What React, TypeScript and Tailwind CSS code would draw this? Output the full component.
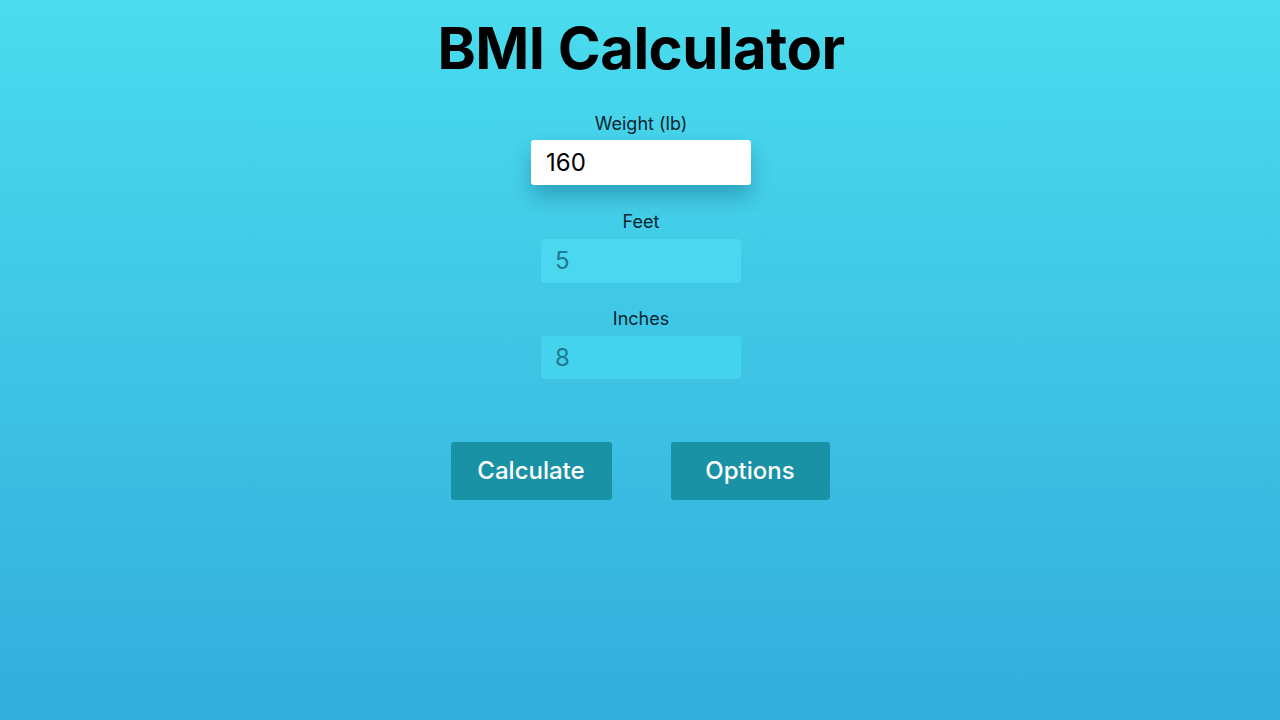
export default function App() {
  return (
    <main
      className="flex min-h-[720px] w-full flex-col items-center bg-gradient-to-b from-[#4adcee] to-[#33addc] pl-[2px] text-black"
      style={{ fontFamily: "Inter, 'Noto Sans', sans-serif" }}
    >
      <h1 className="mt-[14px] text-[58px] font-bold leading-[68px] tracking-[-0.5px]">BMI Calculator</h1>

      <label className="mt-[30px] text-[18px] leading-[24px] text-[#0b2530]">Weight (lb)</label>
      <div className="mt-[4px] flex h-[45px] w-[220px] items-center rounded-[3px] bg-white px-[15px] text-[24px] shadow-[0_12px_20px_rgba(0,60,90,0.3)]">
        160
      </div>

      <label className="mt-[25px] text-[18px] leading-[24px] text-[#0b2530]">Feet</label>
      <div className="mt-[5px] flex h-[44px] w-[200px] items-center rounded-[3px] bg-[#4bd7f0] px-[14px] text-[24px] text-[#1f7a92]">
        5
      </div>

      <label className="mt-[24px] text-[18px] leading-[24px] text-[#0b2530]">Inches</label>
      <div className="mt-[5px] flex h-[43px] w-[200px] items-center rounded-[3px] bg-[#45d2ee] px-[14px] text-[24px] text-[#1f7a92]">
        8
      </div>

      <div className="mt-[63px] flex gap-[59px] pr-[2px]">
        <button className="h-[58px] w-[161px] rounded-[3px] bg-[#1992a6] text-[24px] font-medium text-white">Calculate</button>
        <button className="h-[58px] w-[159px] rounded-[3px] bg-[#1992a6] text-[24px] font-medium text-white">Options</button>
      </div>
    </main>
  );
}
